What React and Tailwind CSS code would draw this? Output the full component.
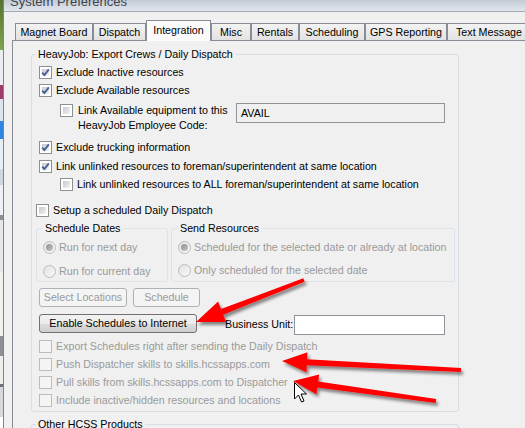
import React from 'react';

const tabs = [
  ['Magnet Board', 78],
  ['Dispatch', 53],
  ['Integration', 65, true],
  ['Misc', 40],
  ['Rentals', 48],
  ['Scheduling', 66],
  ['GPS Reporting', 82],
  ['Text Message', 84],
];

function Check({ checked, disabled }) {
  return (
    <span
      className={`relative block shrink-0 w-[13px] h-[13px] border ${
        disabled ? 'border-[#bcbcbc] bg-[#f4f4f4]' : 'border-[#8e8f8f] bg-white'
      }`}
    >
      {!disabled && (
        <span className="absolute inset-[2px] bg-gradient-to-br from-[#c4c9cf] to-[#f4f4f4]" />
      )}
      {checked && (
        <svg className="absolute inset-0" width="11" height="11" viewBox="0 0 11 11">
          <path d="M2.2 5.6 L4.4 8 L8.8 2.4" fill="none" stroke="#4a5f96" strokeWidth="1.9" />
        </svg>
      )}
    </span>
  );
}

function Radio({ checked }) {
  return (
    <span className="relative shrink-0 w-[13px] h-[13px] rounded-full border border-[#bcbcbc] bg-gradient-to-br from-[#e2e2e2] to-[#f8f8f8] flex items-center justify-center">
      {checked && <span className="w-[7px] h-[7px] rounded-full bg-gradient-to-br from-[#8f8f8f] to-[#c4c4c4]" />}
    </span>
  );
}

function CheckRow({ label, checked, disabled, className = '' }) {
  return (
    <div className={`flex items-center h-[18px] gap-[4px] whitespace-nowrap ${className}`}>
      <Check checked={checked} disabled={disabled} />
      <span className={disabled ? 'text-[#9a9a9a]' : ''}>{label}</span>
    </div>
  );
}

function RadioRow({ label, checked, className = '' }) {
  return (
    <div className={`flex items-center h-[18px] gap-[3px] whitespace-nowrap ${className}`}>
      <Radio checked={checked} />
      <span className="text-[#9a9a9a]">{label}</span>
    </div>
  );
}

// red callout arrow: tapered shaft + triangular head
function arrowPoints(tail, tip, headLen, headHalf, w0, w1) {
  const dx = tip[0] - tail[0];
  const dy = tip[1] - tail[1];
  const len = Math.hypot(dx, dy);
  const ux = dx / len;
  const uy = dy / len;
  const px = -uy;
  const py = ux;
  const bx = tip[0] - ux * headLen;
  const by = tip[1] - uy * headLen;
  const pts = [
    [tail[0] + (px * w0) / 2, tail[1] + (py * w0) / 2],
    [bx + (px * w1) / 2, by + (py * w1) / 2],
    [bx + px * headHalf, by + py * headHalf],
    tip,
    [bx - px * headHalf, by - py * headHalf],
    [bx - (px * w1) / 2, by - (py * w1) / 2],
    [tail[0] - (px * w0) / 2, tail[1] - (py * w0) / 2],
  ];
  return pts.map((p) => p.join(',')).join(' ');
}

export default function App() {
  return (
    <div className="relative w-[525px] h-[428px] overflow-hidden flex bg-[#f0f0f0] text-[10.7px] leading-[13px] text-black font-['Liberation_Sans','Arial',sans-serif]">
      {/* window behind */}
      <div className="w-[3px] shrink-0 flex flex-col">
        <div className="h-[50px] bg-gradient-to-b from-[#55732f] to-[#7ea452]" />
        <div className="h-[35px] bg-[#e9edf1]" />
        <div className="h-[14px] bg-[#a03a6a]" />
        <div className="h-[22px] bg-[#dde3ea]" />
        <div className="h-[18px] bg-[#2f86e0]" />
        <div className="h-[30px] bg-[#e8eef6]" />
        <div className="h-[16px] bg-[#cfd6de]" />
        <div className="h-[30px] bg-[#eef2f7]" />
        <div className="h-[5px] bg-[#8a8f96]" />
        <div className="h-[52px] bg-[#e4e6e8]" />
        <div className="h-[64px] bg-[#f0f0f0]" />
        <div className="h-[20px] bg-[#8c9096]" />
        <div className="h-[28px] bg-[#eeeeee]" />
        <div className="h-[3px] bg-[#6f747b]" />
        <div className="h-[30px] bg-[#d6d8db]" />
        <div className="flex-1 bg-white" />
      </div>
      <div className="w-px shrink-0 bg-[#7d848e]" />

      {/* dialog */}
      <div className="flex-1 min-w-0 flex flex-col overflow-hidden">
        <div className="shrink-0 h-[11px] overflow-hidden pl-[6px] bg-gradient-to-b from-[#c3cbd6] to-[#e2e7ee] border-b border-[#a2aab6] box-content">
          <div className="mt-[-5px] text-[13px] leading-[13px] text-[#3f434a] whitespace-nowrap">
            System Preferences
          </div>
        </div>

        <div className="shrink-0 h-[28px] flex items-end pl-[11px]">
          {tabs.map(([name, w, sel]) => (
            <div
              key={name}
              style={{ width: w }}
              className={
                sel
                  ? 'relative z-10 -mb-px h-[21px] shrink-0 border border-b-0 border-[#898c95] bg-[#fbfbfb] flex items-center justify-center pb-[2px] whitespace-nowrap'
                  : 'h-[17px] shrink-0 border border-b-0 border-[#898c95] bg-gradient-to-b from-[#f3f3f3] to-[#e2e2e2] flex items-center justify-center whitespace-nowrap overflow-hidden'
              }
            >
              {name}
            </div>
          ))}
        </div>

        <div className="ml-[8px] w-[560px] flex-1 min-h-0 border-l border-t border-[#898c95] pt-[7px] pl-[18px]">
          <fieldset className="w-[428px] border border-[#d5dfe5] rounded-[3px] pb-[2px]">
            <legend className="ml-[4px] px-[2px] leading-[13px]">HeavyJob: Export Crews / Daily Dispatch</legend>
            <div className="pl-[7px]">
              <CheckRow className="mt-[2px]" checked label="Exclude Inactive resources" />
              <CheckRow checked label="Exclude Available resources" />

              <div className="mt-[4px] ml-[21px] flex items-start">
                <div className="mt-px">
                  <Check />
                </div>
                <div className="ml-[5px] w-[158px] leading-[15px] whitespace-nowrap">
                  <div>Link Available equipment to this</div>
                  <div>HeavyJob Employee Code:</div>
                </div>
                <div className="w-[209px] h-[20px] border border-[#8f949b] bg-[#f0f0f0] flex items-center pl-[4px]">
                  AVAIL
                </div>
              </div>

              <CheckRow className="mt-[5px]" checked label="Exclude trucking information" />
              <CheckRow className="mt-px" checked label="Link unlinked resources to foreman/superintendent at same location" />
              <CheckRow className="ml-[21px]" label="Link unlinked resources to ALL foreman/superintendent at same location" />

              <CheckRow className="mt-[8px] -ml-[3px]" label="Setup a scheduled Daily Dispatch" />

              <div className="mt-[3px] -ml-[3px] flex gap-[3px]">
                <fieldset className="w-[132px] border border-[#dde3e8] rounded-[3px] pb-px">
                  <legend className="ml-[6px] px-[2px] leading-[13px]">Schedule Dates</legend>
                  <div className="pl-[6px]">
                    <RadioRow className="mt-[3px]" checked label="Run for next day" />
                    <RadioRow className="mt-[6px]" label="Run for current day" />
                  </div>
                </fieldset>
                <fieldset className="w-[284px] border border-[#dde3e8] rounded-[3px] pb-px">
                  <legend className="ml-[6px] px-[2px] leading-[13px]">Send Resources</legend>
                  <div className="pl-[6px]">
                    <RadioRow className="mt-[3px]" checked label="Scheduled for the selected date or already at location" />
                    <RadioRow className="mt-[5px]" label="Only scheduled for the selected date" />
                  </div>
                </fieldset>
              </div>

              <div className="mt-[6px] flex gap-[6px]">
                <div className="w-[88px] h-[19px] rounded-[3px] border border-[#adb2b5] bg-[#f4f4f4] text-[#9a9a9a] flex items-center justify-center whitespace-nowrap">
                  Select Locations
                </div>
                <div className="w-[67px] h-[19px] rounded-[3px] border border-[#adb2b5] bg-[#f4f4f4] text-[#9a9a9a] flex items-center justify-center">
                  Schedule
                </div>
              </div>

              <div className="mt-[7px] flex items-start">
                <div className="w-[158px] h-[19px] rounded-[3px] border border-[#707070] bg-[linear-gradient(#f2f2f2_0%,#ebebeb_50%,#dddddd_50%,#cfcfcf_100%)] flex items-center justify-center whitespace-nowrap">
                  Enable Schedules to Internet
                </div>
                <div className="ml-[28px] w-[69px] h-[21px] flex items-center whitespace-nowrap">Business Unit:</div>
                <div className="w-[151px] h-[20px] mt-px border border-[#8f949b] bg-white" />
              </div>

              <CheckRow className="mt-[2px]" disabled label="Export Schedules right after sending the Daily Dispatch" />
              <CheckRow disabled label="Push Dispatcher skills to skills.hcssapps.com" />
              <CheckRow disabled label="Pull skills from skills.hcssapps.com to Dispatcher" />
              <CheckRow disabled label="Include inactive/hidden resources and locations" />
            </div>
          </fieldset>

          <fieldset className="mt-[6px] w-[428px] h-[40px] border border-[#d5dfe5] rounded-[3px]">
            <legend className="ml-[4px] px-[2px] leading-[13px]">Other HCSS Products</legend>
          </fieldset>
        </div>
      </div>

      {/* annotations */}
      <svg className="absolute inset-0 pointer-events-none" width="525" height="428" viewBox="0 0 525 428">
        <defs>
          <filter id="sh" x="-20%" y="-50%" width="140%" height="200%">
            <feDropShadow dx="2" dy="3" stdDeviation="1.6" floodColor="#000" floodOpacity="0.45" />
          </filter>
        </defs>
        <g fill="#ff0000" filter="url(#sh)">
          <polygon points={arrowPoints([304, 280], [196, 322], 28, 11, 4, 6)} />
          <polygon points={arrowPoints([461, 370], [282, 361], 25, 10, 4, 6)} />
          <polygon points={arrowPoints([436, 401], [293, 381], 25, 10, 4, 6)} />
        </g>
        <path
          d="M294.5 382.5 L294.5 399 L298.5 395 L301.5 402 L304 401 L301 394 L306.5 394 Z"
          fill="#fff"
          stroke="#000"
          strokeWidth="1"
          strokeLinejoin="round"
        />
      </svg>
    </div>
  );
}
